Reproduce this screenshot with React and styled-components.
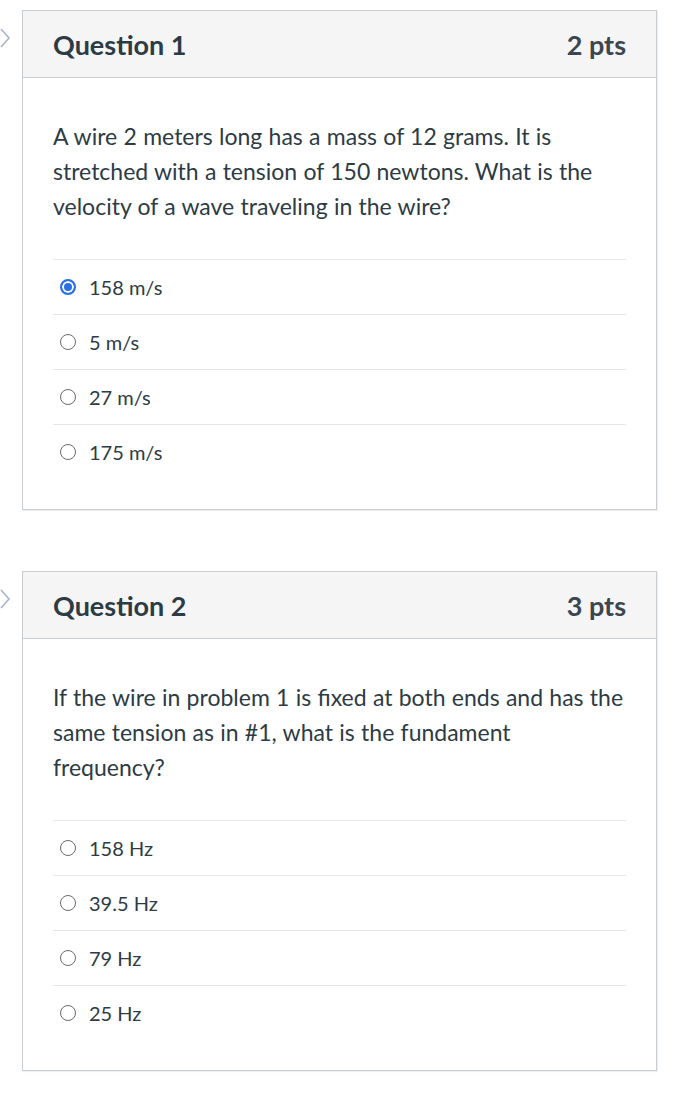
import React from "react";
import styled, { createGlobalStyle } from "styled-components";

const GlobalStyle = createGlobalStyle`
    html, body {
        margin: 0;
        padding: 0;
        background: #fff;
        font-family: Lato, "Open Sans", sans-serif;
        color: #2d3b45;
    }
`;

const Page = styled.div`
    display: flex;
    flex-direction: column;
    gap: 61px;
    padding: 10px 28px 40px 22px;
`;

const Card = styled.section`
    position: relative;
    border: 1px solid #c7cdd1;
    box-shadow: 1px 1px 1px rgba(0, 0, 0, 0.06);
    background: #fff;
`;

const Marker = styled.svg`
    position: absolute;
    left: -23px;
    top: 17px;
`;

const Header = styled.header`
    display: flex;
    align-items: center;
    justify-content: space-between;
    height: 66px;
    padding: 0 30px;
    background: #f5f5f5;
    border-bottom: 1px solid #c7cdd1;
    h2 {
        margin: 0;
        font-size: 27px;
        font-weight: 700;
        color: #2d3b45;
    }
`;

const Points = styled.span`
    font-size: 27px;
    font-weight: 700;
    color: #3b4650;
`;

const Body = styled.div`
    padding: 41px 30px 30px;
`;

const Prompt = styled.p`
    margin: 0 0 35px;
    font-size: 23px;
    line-height: 35px;
    word-spacing: 0.4px;
    color: #2d3b45;
`;

const Answers = styled.ul`
    list-style: none;
    margin: 0;
    padding: 0;
`;

const Answer = styled.li`
    display: flex;
    align-items: center;
    gap: 13px;
    height: 55px;
    padding-left: 7px;
    border-top: 1px solid #e6e6e6;
    box-sizing: border-box;
    font-size: 20px;
    color: #2d3b45;
`;

const Radio = styled.span`
    flex: none;
    width: 16px;
    height: 16px;
    border-radius: 50%;
    box-sizing: border-box;
    border: ${({ checked }) => (checked ? "2px solid #2b6fe6" : "1px solid #6b6b6b")};
    background: ${({ checked }) => (checked ? "#2b6fe6" : "#fff")};
    box-shadow: ${({ checked }) => (checked ? "inset 0 0 0 2px #fff" : "none")};
`;

const questions = [
    {
        title: "Question 1",
        pts: "2 pts",
        text: "A wire 2 meters long has a mass of 12 grams. It is stretched with a tension of 150 newtons. What is the velocity of a wave traveling in the wire?",
        answers: ["158 m/s", "5 m/s", "27 m/s", "175 m/s"],
        picked: 0,
    },
    {
        title: "Question 2",
        pts: "3 pts",
        text: "If the wire in problem 1 is fixed at both ends and has the same tension as in #1, what is the fundament frequency?",
        answers: ["158 Hz", "39.5 Hz", "79 Hz", "25 Hz"],
        picked: -1,
    },
];

const Question = ({ q }) => (
    <Card>
        <Marker width="12" height="20" viewBox="0 0 12 20">
            <path d="M1 1 L9 10 L1 19" fill="none" stroke="#a9b4c6" strokeWidth="1.6" />
        </Marker>
        <Header>
            <h2>{q.title}</h2>
            <Points>{q.pts}</Points>
        </Header>
        <Body>
            <Prompt>{q.text}</Prompt>
            <Answers>
                {q.answers.map((a, i) => (
                    <Answer key={a}>
                        <Radio checked={i === q.picked} />
                        {a}
                    </Answer>
                ))}
            </Answers>
        </Body>
    </Card>
);

export default function App() {
    return (
        <>
            <GlobalStyle />
            <Page>
                {questions.map((q) => (
                    <Question key={q.title} q={q} />
                ))}
            </Page>
        </>
    );
}
